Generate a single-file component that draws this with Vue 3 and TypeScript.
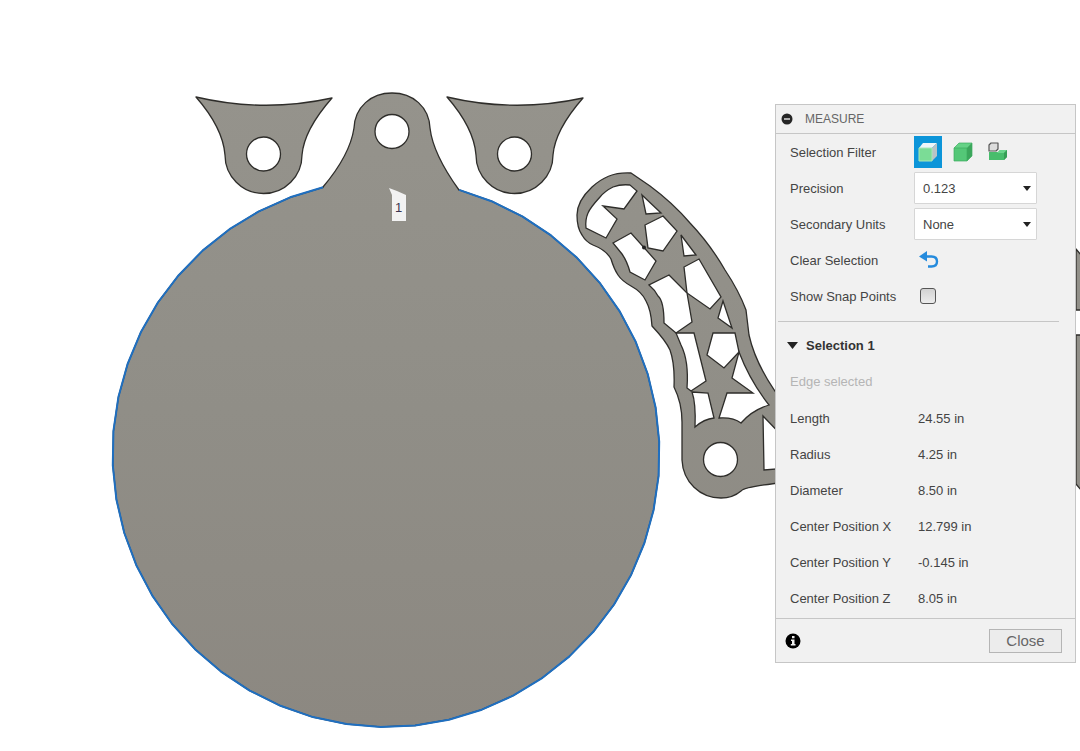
<script setup lang="ts">
import { ref } from 'vue'

interface Measurement {
  label: string
  value: string
}

type Filter = 'face' | 'body' | 'component'

const filter = ref<Filter>('face')
const precision = ref('0.123')
const units = ref('None')
const snapPoints = ref(false)
const expanded = ref(true)

const measurements: Measurement[] = [
  { label: 'Length', value: '24.55 in' },
  { label: 'Radius', value: '4.25 in' },
  { label: 'Diameter', value: '8.50 in' },
  { label: 'Center Position X', value: '12.799 in' },
  { label: 'Center Position Y', value: '-0.145 in' },
  { label: 'Center Position Z', value: '8.05 in' },
]

const bracketOffsets = [0, 251]

// The large round edge, tessellated clockwise from the right side of the lug to the left
const arcSegments = 46
const arcPoints = Array.from({ length: arcSegments + 1 }, (_, i) => {
  const angle = ((-74.5 + (331.2 * i) / arcSegments) * Math.PI) / 180
  return `${(386 + 273.5 * Math.cos(angle)).toFixed(1)} ${(453.5 + 273.5 * Math.sin(angle)).toFixed(1)}`
}).join('L')

const discPath =
  `M323 187Q350 155 354 128C355 107 371 93 392 93S429 107 430 128Q433 154 459 190L${arcPoints}Z` +
  'M375 131.5a17 17 0 1 0 34 0a17 17 0 1 0-34 0Z'

// Openings cut into the curved arm
const cutouts: string[] = [
  'M603 206L624 209L637 191L630 185Q621 184 613 187Q605 191 600 197Q590 208 588 213Q585 220 586 228L606 238L617 219Z',
  'M642 195L661 213L646 214Z',
  'M663 216L677 231L663 251L648 248L645 225Z',
  'M613 243L631 233L656 261L645 280L630 272Q627 261 622 254Z',
  'M681 235L696 255L684 256Z',
  'M699 259L721 297L710 309L687 293L684 267Z',
  'M669 275L687 293L692 322L676 333L664 323Q664 301 658 296Q655 290 649 285Z',
  'M723 301L732 328L718 318Z',
  'M713 333H735L739 352L724 368L707 355Z',
  'M676 333H694L706 381L691 391L687 388Q689 361 681 345Z',
  'M739 352Q750 381 769 405Q752 410 741 423Q733 417 719 418L727 393H753L732 378Z',
  'M692 392L708 393L714 418Q704 419 695 427Q696 403 692 392Z',
  'M763 416L790 444V468L764 470Z',
]
</script>

<template>
  <main class="workspace">
    <svg class="canvas" viewBox="0 0 1080 751" role="img" aria-label="Sketch bodies">
      <defs>
        <linearGradient id="metal" gradientUnits="userSpaceOnUse" x1="0" y1="90" x2="0" y2="727">
          <stop offset="0" stop-color="#95938c" />
          <stop offset="0.5" stop-color="#908e87" />
          <stop offset="1" stop-color="#8c8881" />
        </linearGradient>
      </defs>
      <g class="body">
        <path
          v-for="dx in bracketOffsets"
          :key="dx"
          :transform="`translate(${dx} 0)`"
          d="M196 97Q264 113 332 98Q304 130 302 155A38.500 38.500 0 0 1 225 155Q223 128 196 97ZM246.500 154a17 17 0 1 0 34 0a17 17 0 1 0-34 0Z"
        />
        <path :d="discPath" />
        <path
          d="M631 173C613 172 602 178 592 187Q577 201 577 215Q577 228 582 235Q586 242 593 245Q606 250 611 259Q614 269 618 275Q622 281 631 286Q642 292 646 301Q651 310 652 326Q666 341 670 350Q675 364 674 387Q682 403 682 422V460C683 482 700 498 721 498Q733 498 741 491Q746 486 790 482V411Q757 371 749 335L746 310Q739 291 725 270Q710 244 690 223Q673 203 650 186Z"
        />
        <path d="M1076 249L1086 261V310H1076Z" />
        <path d="M1076 335H1086V496L1076 484Z" />
      </g>
      <g class="hole">
        <path v-for="d in cutouts" :key="d" :d="d" />
        <circle cx="720.5" cy="459.5" r="17" />
      </g>
      <circle cx="644" cy="247.500" r="2" fill="#222" />
      <path class="edge" :d="`M${arcPoints}`" />
      <path class="tag" d="M389 188L397 191L406 195V221H392V195Z" />
      <text class="tag-text" x="395" y="212">1</text>
    </svg>

    <section class="panel" aria-label="Measure">
      <header class="title">
        <svg class="dot" viewBox="0 0 12 12" aria-hidden="true">
          <circle cx="6" cy="6" r="5.500" fill="#262626" />
          <path d="M3 6H9" stroke="#ddd" stroke-width="1.500" />
        </svg>
        <h1>MEASURE</h1>
      </header>

      <div class="settings">
        <div class="row">
          <span class="label">Selection Filter</span>
          <div class="filters">
            <button type="button" :class="{ active: filter === 'face' }" aria-label="Face" @click="filter = 'face'">
              <svg viewBox="0 0 20 20">
                <path d="M1 6L5 1H19L14 6Z" fill="#eef5f9" />
                <path d="M14 6L19 1V14L14 19Z" fill="#b9c3c7" />
                <path d="M1 6H14V19H1Z" fill="#7bdc96" stroke="#a9e6ba" stroke-width="1" />
              </svg>
            </button>
            <button type="button" :class="{ active: filter === 'body' }" aria-label="Body" @click="filter = 'body'">
              <svg viewBox="0 0 20 20">
                <path d="M1 6L6 1H19L14 6Z" fill="#65d286" />
                <path d="M14 6L19 1V14L14 19Z" fill="#3ba65b" />
                <path d="M1 6H14V19H1Z" fill="#54c777" />
                <path d="M1 6L6 1H19V14L14 19H1ZM1 6H14V19M14 6L19 1" fill="none" stroke="#3ead60" stroke-width=".7" />
              </svg>
            </button>
            <button type="button" :class="{ active: filter === 'component' }" aria-label="Component" @click="filter = 'component'">
              <svg viewBox="0 0 20 20">
                <path d="M1 10H10L12 8H19V15L16 18H1Z" fill="#48bd6c" />
                <path d="M9 11L12 8H19L16 11Z" fill="#6ad58c" />
                <path d="M16 11L19 8V15L16 18Z" fill="#369e56" />
                <path d="M1 3L3 1H10V7L8 9H1Z" fill="#dcdcdc" stroke="#555" stroke-width="1.200" stroke-linejoin="round" />
              </svg>
            </button>
          </div>
        </div>
        <div class="row">
          <label class="label" for="precision">Precision</label>
          <div class="picker">
            <select id="precision" v-model="precision">
              <option>0.123</option>
              <option>0.12</option>
            </select>
          </div>
        </div>
        <div class="row">
          <label class="label" for="units">Secondary Units</label>
          <div class="picker">
            <select id="units" v-model="units">
              <option>None</option>
              <option>mm</option>
            </select>
          </div>
        </div>
        <div class="row">
          <span class="label">Clear Selection</span>
          <button class="undo" type="button" aria-label="Clear Selection">
            <svg viewBox="0 0 20 18">
              <path d="M6 5.500H12.500C16 5.500 18 7.500 18 10.500S16 15.500 12.500 15.500H9" fill="none" stroke="#258bdd" stroke-width="2.400" />
              <path d="M0 5.500L8 0V10.500Z" fill="#258bdd" />
            </svg>
          </button>
        </div>
        <div class="row">
          <label class="label" for="snap">Show Snap Points</label>
          <input id="snap" v-model="snapPoints" type="checkbox" />
        </div>
      </div>

      <div class="results">
        <button class="toggle" type="button" :aria-expanded="expanded" @click="expanded = !expanded">
          <svg viewBox="0 0 11 7" aria-hidden="true"><path d="M0 0H11L5.500 7Z" fill="#222" /></svg>
          Selection 1
        </button>
        <p class="hint">Edge selected</p>
        <table v-if="expanded">
          <tbody>
            <tr v-for="m in measurements" :key="m.label">
              <th scope="row">{{ m.label }}</th>
              <td>{{ m.value }}</td>
            </tr>
          </tbody>
        </table>
      </div>

      <footer class="actions">
        <svg class="info" viewBox="0 0 16 16" role="img" aria-label="Information">
          <circle cx="8" cy="8" r="7.500" fill="#000" />
          <path d="M7 3H9.500V5.200H7ZM6 6.500H9.500V11H10.500V12.500H5.800V11H7V8H6Z" fill="#f1f1f1" />
        </svg>
        <button class="close" type="button">Close</button>
      </footer>
    </section>
  </main>
</template>

<style>
body {
  margin: 0;
  background: #fff;
}
</style>

<style scoped>
.workspace {
  position: relative;
  min-height: 100vh;
  overflow: hidden;
  font-family: "Liberation Sans", Arial, sans-serif;
  font-size: 13px;
  color: #444;
}

.canvas {
  display: block;
  width: 100%;
}

.body {
  fill: url(#metal);
  fill-rule: evenodd;
  stroke: #2e2d2a;
  stroke-width: 1.3;
  stroke-linejoin: round;
}

.hole {
  fill: #fff;
  stroke: #2e2d2a;
  stroke-width: 1.3;
}

.edge {
  fill: none;
  stroke: #1f6fc0;
  stroke-width: 2;
  stroke-linejoin: round;
}

.tag {
  fill: #f2f2f2;
}

.tag-text {
  font-size: 13px;
  fill: #3c3550;
}

.panel {
  position: absolute;
  top: 104px;
  right: 4px;
  box-sizing: border-box;
  width: 301px;
  border: 1px solid #c6c6c6;
  background: #f1f1f1;
}

.title {
  display: flex;
  align-items: center;
  gap: 12px;
  height: 28px;
  padding: 0 5px;
  border-bottom: 1px solid #c6c6c6;
}

.title h1 {
  margin: 0;
  font-size: 12px;
  font-weight: 400;
  color: #666;
}

.dot {
  width: 12px;
  height: 12px;
}

.settings {
  margin: 0 16px 0 2px;
  padding: 0 0 7px 12px;
  border-bottom: 1px solid #c6c6c6;
}

.row {
  display: flex;
  align-items: center;
  height: 36px;
}

.label {
  flex: none;
  width: 124px;
}

button {
  padding: 0;
  border: 0;
  background: none;
  font: inherit;
  color: inherit;
}

.filters {
  display: flex;
  gap: 7px;
}

.filters button {
  display: flex;
  align-items: center;
  justify-content: center;
  width: 28px;
  height: 32px;
}

.filters .active {
  background: #0c95d9;
}

.filters svg {
  width: 20px;
  height: 20px;
}

.picker {
  position: relative;
  width: 123px;
}

.picker::after {
  content: "";
  position: absolute;
  top: 14px;
  right: 6px;
  border: 4px solid transparent;
  border-top: 5px solid #222;
  border-bottom: 0;
  pointer-events: none;
}

select {
  display: block;
  appearance: none;
  box-sizing: border-box;
  width: 100%;
  height: 32px;
  padding: 0 20px 0 8px;
  border: 1px solid #d6d6d6;
  border-radius: 1px;
  background: #fff;
  font: inherit;
  color: #444;
}

.undo {
  width: 20px;
  height: 18px;
  margin-left: 5px;
}

.undo svg {
  display: block;
}

#snap {
  appearance: none;
  box-sizing: border-box;
  width: 16px;
  height: 16px;
  margin: 0 0 0 6px;
  border: 1px solid #555;
  border-radius: 3px;
  background: linear-gradient(#d2d2d2, #ececec);
}

#snap:checked {
  background: #258bdd;
}

.results {
  padding: 5px 14px 2px;
}

.toggle {
  display: flex;
  align-items: center;
  gap: 8px;
  height: 36px;
  margin-left: -3px;
  font-weight: 700;
  color: #333;
}

.toggle svg {
  width: 11px;
  height: 7px;
}

.hint {
  margin: 0;
  line-height: 37px;
  color: #b5b5b5;
}

table {
  width: 100%;
  border-collapse: collapse;
}

th,
td {
  height: 36px;
  padding: 0;
  font-weight: 400;
  text-align: left;
}

th {
  width: 128px;
}

.actions {
  display: flex;
  align-items: center;
  justify-content: space-between;
  height: 43px;
  padding: 0 13px 0 9px;
  border-top: 1px solid #c6c6c6;
}

.info {
  width: 16px;
  height: 16px;
}

.close {
  width: 73px;
  height: 24px;
  border: 1px solid #b5b5b5;
  background: #ececec;
  font-size: 15px;
  color: #666;
}
</style>
